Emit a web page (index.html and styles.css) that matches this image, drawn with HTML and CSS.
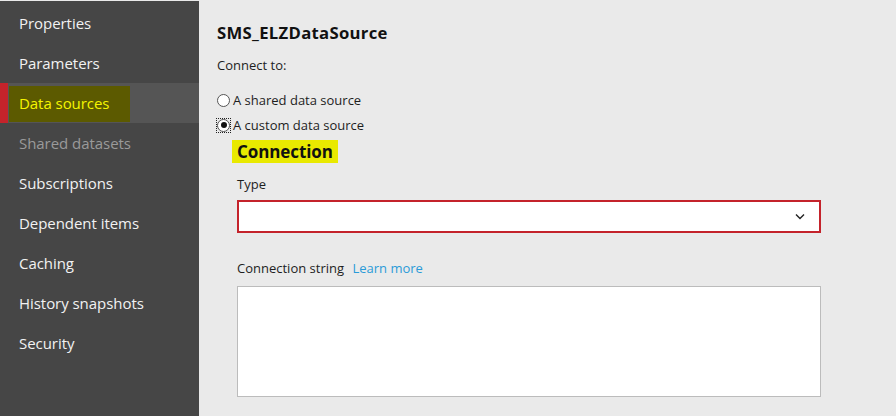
FILE: index.html
```html
<!DOCTYPE html>
<html>
<head>
<meta charset="utf-8">
<link rel="stylesheet" href="styles.css">
</head>
<body>
<div class="page">
  <nav class="sidebar">
    <div class="nav-item">Properties</div>
    <div class="nav-item">Parameters</div>
    <div class="nav-item active"><span class="mark">Data sources</span></div>
    <div class="nav-item disabled">Shared datasets</div>
    <div class="nav-item">Subscriptions</div>
    <div class="nav-item">Dependent items</div>
    <div class="nav-item">Caching</div>
    <div class="nav-item">History snapshots</div>
    <div class="nav-item">Security</div>
  </nav>
  <main class="content">
    <h1 class="title">SMS_ELZDataSource</h1>
    <div class="label">Connect to:</div>
    <div class="radio-row"><span class="radio"></span><span>A shared data source</span></div>
    <div class="radio-row second"><span class="radio-focus"><span class="radio checked"></span></span><span>A custom data source</span></div>
    <section class="connection">
      <h2 class="section-title"><span class="hl">Connection</span></h2>
      <div class="field-label">Type</div>
      <div class="select">
        <svg class="chevron" width="10" height="7" viewBox="0 0 10 7"><path d="M1 1.5 L5 5.5 L9 1.5" fill="none" stroke="#222" stroke-width="1.4"/></svg>
      </div>
      <div class="field-label cs">Connection string <a class="link">Learn more</a></div>
      <div class="textarea"></div>
    </section>
  </main>
</div>
</body>
</html>
```
FILE: styles.css
```css
* { box-sizing: border-box; }
html, body { margin: 0; padding: 0; }
body {
  width: 896px;
  height: 416px;
  overflow: hidden;
  background: #eaeaea;
  font-family: "Open Sans", "Noto Sans", sans-serif;
  color: #1e1e1e;
}
.page {
  display: flex;
  height: 416px;
  padding-top: 1px;
}
.sidebar {
  width: 199px;
  background: #464646;
  display: flex;
  flex-direction: column;
  padding-top: 2px;
}
.nav-item {
  height: 40px;
  line-height: 40px;
  padding-left: 19px;
  color: #f2f2f2;
  font-size: 15px;
  letter-spacing: -0.05px;
}
.nav-item.active {
  background: #555555;
  border-left: 8px solid #c4232b;
  padding-left: 11px;
  color: #f5f500;
}
.nav-item.active .mark {
  background: #5c5a00;
  padding: 7px 21px 9px 10px;
  margin-left: -10px;
}
.nav-item.disabled { color: #9a9a9a; }
.content {
  flex: 1;
  padding-left: 18px;
  padding-top: 21px;
  display: flex;
  flex-direction: column;
}
.title {
  margin: 0;
  font-size: 16.7px;
  font-weight: bold;
  line-height: 22px;
  letter-spacing: 0.3px;
  color: #111;
}
.label {
  font-size: 13px;
  margin-top: 12px;
  line-height: 18px;
}
.radio-row {
  display: flex;
  align-items: center;
  gap: 3px;
  font-size: 13px;
  line-height: 18px;
  margin-top: 17px;
}
.radio-row.second { margin-top: 7px; }
.radio {
  width: 13px;
  height: 13px;
  border: 1px solid #555;
  border-radius: 50%;
  background: #fff;
  display: inline-block;
  position: relative;
}
.radio.checked::after {
  content: "";
  position: absolute;
  left: 2.5px;
  top: 2.5px;
  width: 6px;
  height: 6px;
  border-radius: 50%;
  background: #111;
}
.radio-focus {
  display: inline-flex;
  outline: 1px dotted #222;
}
.connection {
  padding-left: 20px;
  display: flex;
  flex-direction: column;
}
.section-title {
  margin: 8px 0 0 -5px;
  font-size: 17px;
  font-weight: bold;
  line-height: 20px;
  letter-spacing: -0.1px;
}
.hl {
  background: #e9e900;
  padding: 0 5px 0 5px;
  color: #111;
}
.field-label {
  font-size: 13px;
  line-height: 18px;
  margin-top: 13px;
}
.select {
  margin-top: 7px;
  width: 584px;
  height: 33px;
  background: #fff;
  border: 2px solid #c4232b;
  display: flex;
  align-items: center;
  justify-content: flex-end;
  padding-right: 14px;
}
.field-label.cs { margin-top: 26px; }
.link { color: #2a9bd8; margin-left: 5px; }
.textarea {
  margin-top: 9px;
  width: 584px;
  height: 111px;
  background: #fff;
  border: 1px solid #bcbcbc;
}
```
